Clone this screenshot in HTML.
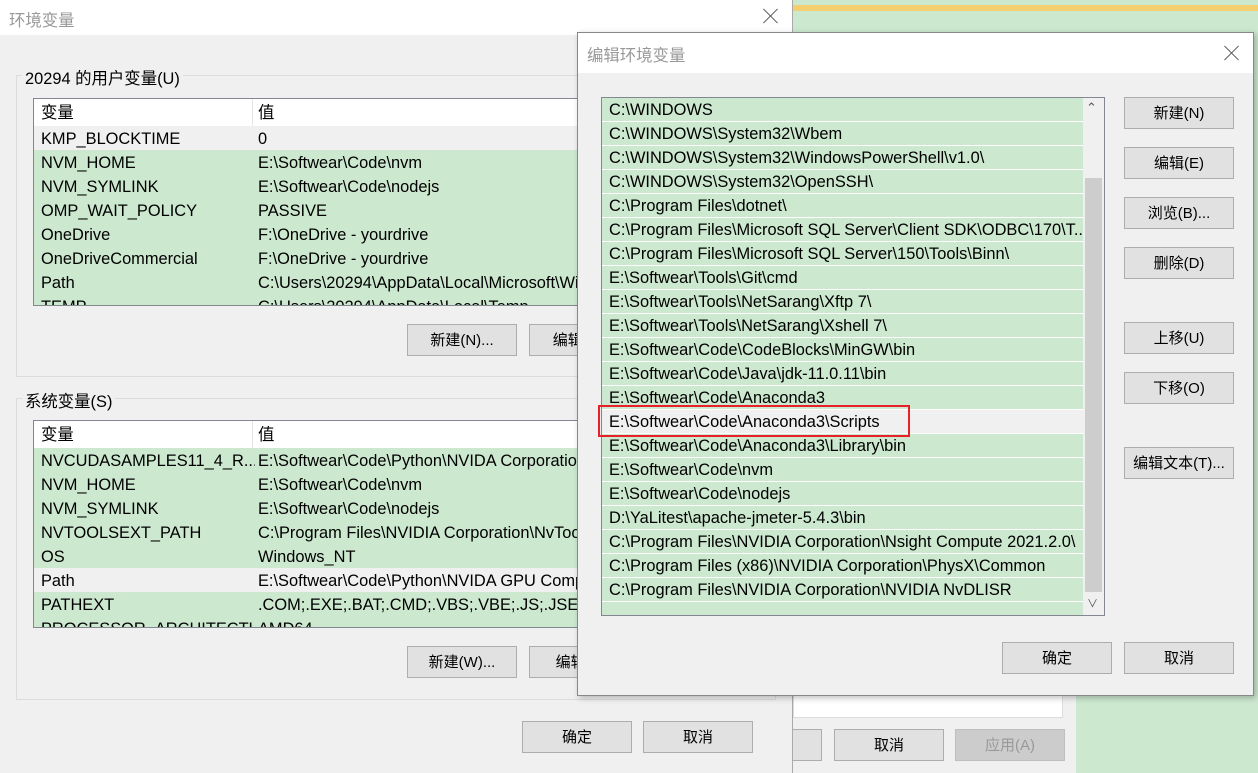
<!DOCTYPE html>
<html><head><meta charset="utf-8"><style>
*{box-sizing:border-box;margin:0;padding:0}
body{width:1258px;height:773px;overflow:hidden;position:relative;background:#cce8cf;font-family:"Liberation Sans","Noto Sans CJK SC",sans-serif;font-size:16.4px;color:#000}
.abs{position:absolute}
.btn{position:absolute;background:#e1e1e1;border:1px solid #adadad;text-align:center;line-height:32px;height:32px;width:110px;font-size:15px}
.row{position:absolute;left:0;height:24px;line-height:25px;white-space:nowrap;overflow:hidden}
.x{position:absolute;width:16px;height:16px}
.x:before,.x:after{content:"";position:absolute;left:7px;top:-2px;width:1px;height:20px;background:#555}
.x:before{transform:rotate(45deg)}.x:after{transform:rotate(-45deg)}
.lst{line-height:24px;padding-top:1px}
</style></head><body>
<div class="abs" style="left:793px;top:5px;width:465px;height:6px;background:#f3cf6e"></div>
<div class="abs" style="left:793px;top:32px;width:283px;height:741px;background:#f0f0f0"></div>
<div class="abs" style="left:793px;top:695px;width:270px;height:23px;background:#fff;border:1px solid #ddd;border-top:none"></div>
<div class="btn" style="left:712px;top:729px">确定</div>
<div class="btn" style="left:834px;top:729px">取消</div>
<div class="btn" style="left:955px;top:729px;color:#999;background:#ccc;border-color:#bfbfbf">应用(A)</div>

<div class="abs" style="left:0;top:0;width:793px;height:773px;background:#f0f0f0;border-right:1px solid #aaa">
 <div class="abs" style="left:0;top:0;width:792px;height:35px;background:#fff"></div>
 <div class="abs" style="left:9px;top:7px;color:#999">环境变量</div>
 <div class="x" style="left:763px;top:8px"></div>
 <div class="abs" style="left:16px;top:75px;width:760px;height:302px;border:1px solid #dcdcdc"></div>
 <div class="abs" style="left:22px;top:65px;background:#f0f0f0;padding:0 3px">20294 的用户变量(U)</div>
 <div class="abs" style="left:33px;top:98px;width:740px;height:208px;border:1px solid #828790;background:#cce8cf;overflow:hidden">
  <div class="row" style="top:0;width:100%;height:27px;line-height:29px;background:#fff"><span class="abs" style="left:7px">变量</span><span class="abs" style="left:218px;top:0;height:27px;border-left:1px solid #e5e5e5"></span><span class="abs" style="left:224px">值</span></div>
  <div class="row" style="top:27px;width:100%;background:#f0f0f0;height:24px"></div>
  <div class="abs lst" style="left:7px;top:27px;white-space:nowrap">KMP_BLOCKTIME<br>NVM_HOME<br>NVM_SYMLINK<br>OMP_WAIT_POLICY<br>OneDrive<br>OneDriveCommercial<br>Path<br>TEMP</div>
  <div class="abs lst" style="left:224px;top:27px;white-space:nowrap">0<br>E:\Softwear\Code\nvm<br>E:\Softwear\Code\nodejs<br>PASSIVE<br>F:\OneDrive - yourdrive<br>F:\OneDrive - yourdrive<br>C:\Users\20294\AppData\Local\Microsoft\WindowsApps<br>C:\Users\20294\AppData\Local\Temp</div>
 </div>
 <div class="btn" style="left:407px;top:324px">新建(N)...</div>
 <div class="btn" style="left:529px;top:324px">编辑(E)...</div>

 <div class="abs" style="left:16px;top:398px;width:760px;height:302px;border:1px solid #dcdcdc"></div>
 <div class="abs" style="left:22px;top:388px;background:#f0f0f0;padding:0 3px">系统变量(S)</div>
 <div class="abs" style="left:33px;top:420px;width:740px;height:208px;border:1px solid #828790;background:#cce8cf;overflow:hidden">
  <div class="row" style="top:0;width:100%;height:27px;line-height:29px;background:#fff"><span class="abs" style="left:7px">变量</span><span class="abs" style="left:218px;top:0;height:27px;border-left:1px solid #e5e5e5"></span><span class="abs" style="left:224px">值</span></div>
  <div class="row" style="top:147px;width:100%;background:#f0f0f0"></div>
  <div class="abs lst" style="left:7px;top:27px;white-space:nowrap;width:214px;overflow:hidden">NVCUDASAMPLES11_4_R...<br>NVM_HOME<br>NVM_SYMLINK<br>NVTOOLSEXT_PATH<br>OS<br>Path<br>PATHEXT<br>PROCESSOR_ARCHITECTURE</div>
  <div class="abs lst" style="left:224px;top:27px;white-space:nowrap">E:\Softwear\Code\Python\NVIDA Corporation<br>E:\Softwear\Code\nvm<br>E:\Softwear\Code\nodejs<br>C:\Program Files\NVIDIA Corporation\NvToolsExt<br>Windows_NT<br>E:\Softwear\Code\Python\NVIDA GPU Computing<br>.COM;.EXE;.BAT;.CMD;.VBS;.VBE;.JS;.JSE;.WSF;.WSH<br>AMD64</div>
 </div>
 <div class="btn" style="left:407px;top:646px">新建(W)...</div>
 <div class="btn" style="left:529px;top:646px">编辑(I)...</div>
 <div class="btn" style="left:522px;top:721px">确定</div>
 <div class="btn" style="left:643px;top:721px">取消</div>
</div>

<div class="abs" style="left:577px;top:32px;width:677px;height:664px;background:#f0f0f0;border:1px solid #888;box-shadow:2px 2px 6px rgba(0,0,0,.25)">
 <div class="abs" style="left:0;top:0;width:675px;height:40px;background:#fff"></div>
 <div class="abs" style="left:9px;top:9px;color:#999">编辑环境变量</div>
 <div class="x" style="left:646px;top:12px"></div>
 <div class="abs" style="left:23px;top:64px;width:504px;height:519px;border:1px solid #828790;background:#cce8cf;overflow:hidden">
  <div id="rows"></div>
  <div class="abs" style="left:481px;top:0;width:21px;height:517px;background:#f0f0f0"></div>
  <div class="abs" style="left:483px;top:80px;width:17px;height:414px;background:#cdcdcd"></div>
  <div class="abs" style="left:484px;top:2px;font-size:13px;color:#555">&#8963;</div>
  <div class="abs" style="left:485px;top:497px;font-size:11px;color:#555">&#8744;</div>
 </div>
 <div class="abs" style="left:20px;top:372px;width:312px;height:32px;border:2px solid #e8202a"></div>
 <div class="btn" style="left:546px;top:64px">新建(N)</div>
 <div class="btn" style="left:546px;top:114px">编辑(E)</div>
 <div class="btn" style="left:546px;top:164px">浏览(B)...</div>
 <div class="btn" style="left:546px;top:214px">删除(D)</div>
 <div class="btn" style="left:546px;top:289px">上移(U)</div>
 <div class="btn" style="left:546px;top:339px">下移(O)</div>
 <div class="btn" style="left:546px;top:414px">编辑文本(T)...</div>
 <div class="btn" style="left:424px;top:609px">确定</div>
 <div class="btn" style="left:546px;top:609px">取消</div>
</div>
<script>
var p=["C:\\WINDOWS","C:\\WINDOWS\\System32\\Wbem","C:\\WINDOWS\\System32\\WindowsPowerShell\\v1.0\\","C:\\WINDOWS\\System32\\OpenSSH\\","C:\\Program Files\\dotnet\\","C:\\Program Files\\Microsoft SQL Server\\Client SDK\\ODBC\\170\\T...","C:\\Program Files\\Microsoft SQL Server\\150\\Tools\\Binn\\","E:\\Softwear\\Tools\\Git\\cmd","E:\\Softwear\\Tools\\NetSarang\\Xftp 7\\","E:\\Softwear\\Tools\\NetSarang\\Xshell 7\\","E:\\Softwear\\Code\\CodeBlocks\\MinGW\\bin","E:\\Softwear\\Code\\Java\\jdk-11.0.11\\bin","E:\\Softwear\\Code\\Anaconda3","E:\\Softwear\\Code\\Anaconda3\\Scripts","E:\\Softwear\\Code\\Anaconda3\\Library\\bin","E:\\Softwear\\Code\\nvm","E:\\Softwear\\Code\\nodejs","D:\\YaLitest\\apache-jmeter-5.4.3\\bin","C:\\Program Files\\NVIDIA Corporation\\Nsight Compute 2021.2.0\\","C:\\Program Files (x86)\\NVIDIA Corporation\\PhysX\\Common","C:\\Program Files\\NVIDIA Corporation\\NVIDIA NvDLISR",""];
var h="";p.forEach(function(t,i){h+='<div class="row" style="top:'+(i*24)+'px;width:481px;padding-left:7px;border-bottom:1px solid #fff;'+(i==13?'background:#f0f0f0;':'')+'">'+t.replace(/</g,"&lt;")+'</div>';});
document.getElementById("rows").innerHTML=h;
</script>
</body></html>
